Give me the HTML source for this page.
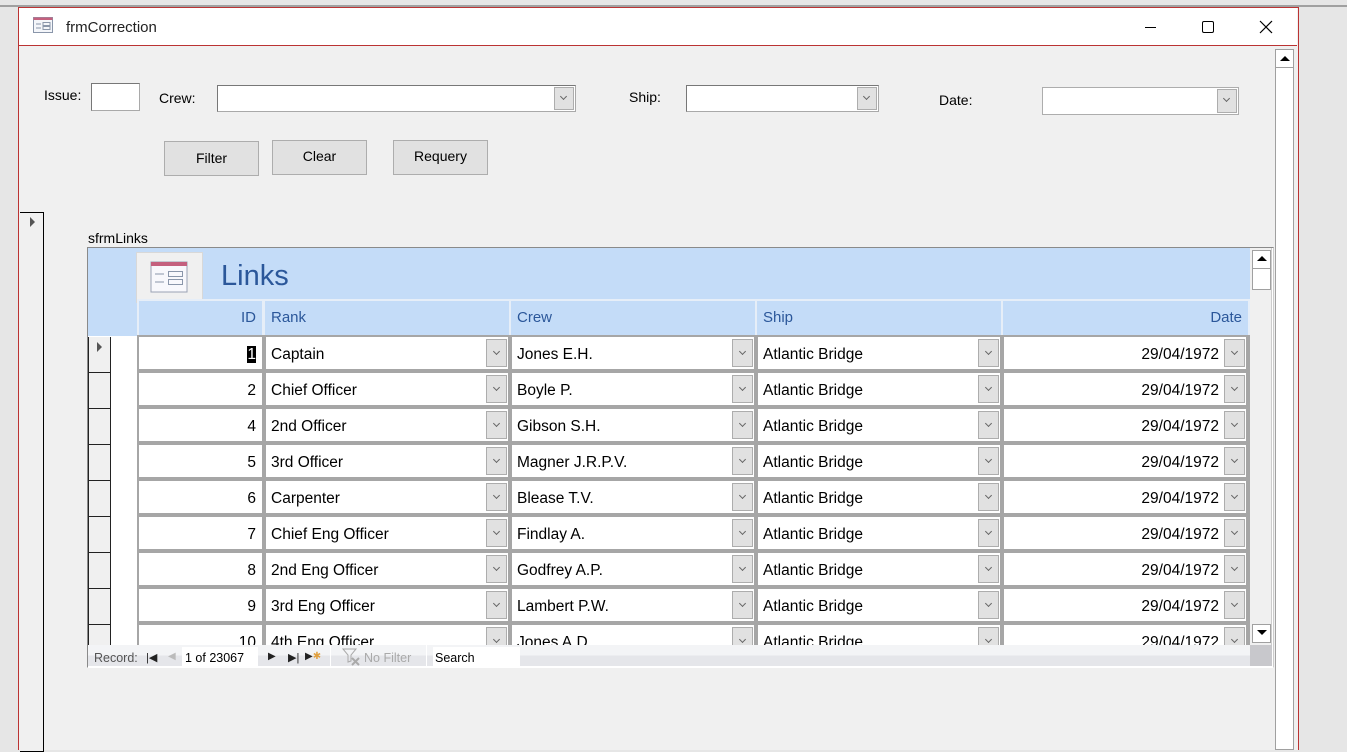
<!DOCTYPE html>
<html><head><meta charset="utf-8"><style>
*{box-sizing:border-box;margin:0;padding:0}
body{width:1347px;height:750px;overflow:hidden;background:#e6e6e6;font-family:"Liberation Sans",sans-serif;position:relative}
.a{position:absolute}
.lbl{font-size:14px;color:#000}
.tb{background:#fff;border:1px solid #a9a9a9;border-top-color:#777;border-left-color:#777}
.dd{position:absolute;right:1px;top:1px;bottom:1px;width:20px;background:#e1e1e1;border:1px solid #adadad}
.dd:after,.cb:after{content:"";position:absolute;left:6px;top:6px;width:4px;height:4px;border-right:1px solid #666;border-bottom:1px solid #666;transform:rotate(45deg)}
.btn{background:#e1e1e1;border:1px solid #adadad;font-size:14px;text-align:center;line-height:33px}
.cell{position:absolute;background:#fff;height:32px;font-size:15.5px;line-height:35px;color:#000;white-space:nowrap;overflow:hidden}
.cb{position:absolute;right:1px;top:2px;width:21px;height:28px;background:#e1e1e1;border:1px solid #adadad}
.cb:after{left:7px;top:9px}
.rs{position:absolute;left:0;width:23px;height:36px;background:#f0f0f0;border:1px solid #222;border-top:none}
.hd{position:absolute;top:0;height:35px;background:#c4dcf8;color:#2b579a;font-size:15px;line-height:33px}
</style></head><body>
<div class="a" style="left:0;top:5px;width:1347px;height:2px;background:#a0a0a0"></div>
<div class="a" style="left:18px;top:7px;width:1281px;height:743px;background:#f0f0f0;border:1px solid #b33;border-bottom:none"></div>
<div class="a" style="left:19px;top:8px;width:1278px;height:38px;background:#fff;border-bottom:1px solid #b33"></div>
<svg class="a" style="left:33px;top:17px" width="20" height="17"><rect x="0.5" y="0.5" width="19" height="15" fill="#f4f6fa" stroke="#8a96aa"/><rect x="0.5" y="0.5" width="19" height="2.5" fill="#c4607e"/><line x1="3" y1="7" x2="8" y2="7" stroke="#8a96aa"/><line x1="3" y1="11" x2="8" y2="11" stroke="#8a96aa"/><rect x="10" y="5.5" width="7" height="3" fill="none" stroke="#8a96aa"/><rect x="10" y="9.5" width="7" height="3" fill="none" stroke="#8a96aa"/></svg>
<div class="a" style="left:66px;top:19px;font-size:15px;color:#222">frmCorrection</div>
<div class="a" style="left:1145px;top:27px;width:11px;height:1px;background:#000"></div>
<div class="a" style="left:1202px;top:21px;width:12px;height:12px;border:1px solid #000;border-radius:2px"></div>
<svg class="a" style="left:1259px;top:20px" width="14" height="14"><path d="M1 1L13 13M13 1L1 13" stroke="#000" stroke-width="1.2"/></svg>
<div class="a" style="left:1275px;top:49px;width:19px;height:701px;background:#fff;border:1px solid #a0a0a0"></div>
<div class="a" style="left:1276px;top:50px;width:17px;height:18px;background:#fff;border-bottom:1px solid #a0a0a0"></div>
<div class="a" style="left:1280px;top:56px;border-left:5px solid transparent;border-right:5px solid transparent;border-bottom:5px solid #000"></div>
<div class="a lbl" style="left:44px;top:87px">Issue:</div>
<div class="a tb" style="left:91px;top:83px;width:49px;height:28px"></div>
<div class="a lbl" style="left:159px;top:90px">Crew:</div>
<div class="a tb" style="left:217px;top:85px;width:359px;height:27px"><div class="dd"></div></div>
<div class="a lbl" style="left:629px;top:89px">Ship:</div>
<div class="a tb" style="left:686px;top:85px;width:193px;height:27px"><div class="dd"></div></div>
<div class="a lbl" style="left:939px;top:92px">Date:</div>
<div class="a tb" style="left:1042px;top:87px;width:197px;height:28px;border-color:#adadad"><div class="dd"></div></div>
<div class="a btn" style="left:164px;top:141px;width:95px;height:35px">Filter</div>
<div class="a btn" style="left:272px;top:140px;width:95px;height:35px;line-height:31px">Clear</div>
<div class="a btn" style="left:393px;top:140px;width:95px;height:35px;line-height:31px">Requery</div>
<div class="a" style="left:20px;top:212px;width:24px;height:540px;border:1px solid #000;border-left:none;background:#f0f0f0"></div>
<div class="a" style="left:30px;top:217px;border-top:5px solid transparent;border-bottom:5px solid transparent;border-left:5px solid #555"></div>
<div class="a lbl" style="left:88px;top:230px">sfrmLinks</div>
<div class="a" style="left:87px;top:247px;width:1187px;height:421px;border:1px solid #8a8a8a;border-right-color:#ccc;border-bottom-color:#fff;background:#fff"></div>
<div class="a" style="left:88px;top:248px;width:1163px;height:88px;background:#c4dcf8"></div>
<div class="a" style="left:136px;top:252px;width:67px;height:51px;background:#f0f0f0;border:1px solid #d8d8d8"></div>
<svg class="a" style="left:150px;top:261px" width="40" height="34"><rect x="1" y="1" width="36" height="30" fill="#f8f8fc" stroke="#9aa2b4"/><rect x="1" y="1" width="36" height="4" fill="#c4607e"/><line x1="5" y1="13" x2="14" y2="13" stroke="#8a96aa"/><line x1="5" y1="21" x2="14" y2="21" stroke="#8a96aa"/><rect x="18.5" y="10.5" width="14" height="5" fill="none" stroke="#8a96aa"/><rect x="18.5" y="18.5" width="14" height="5" fill="none" stroke="#8a96aa"/></svg>
<div class="a" style="left:221px;top:260px;font-size:29px;color:#2b579a">Links</div>
<div class="a" style="left:137px;top:299px;width:1113px;height:37px;background:#e6eef8">
<div class="hd" style="left:2px;top:2px;width:123px;text-align:right;padding-right:6px">ID</div>
<div class="hd" style="left:128px;top:2px;width:244px;padding-left:6px">Rank</div>
<div class="hd" style="left:374px;top:2px;width:244px;padding-left:6px">Crew</div>
<div class="hd" style="left:620px;top:2px;width:244px;padding-left:6px">Ship</div>
<div class="hd" style="left:866px;top:2px;width:245px;text-align:right;padding-right:6px">Date</div>
</div>
<div class="a" style="left:88px;top:336px;width:24px;height:309px;overflow:hidden">
<div class="rs" style="top:1px"></div><div class="rs" style="top:37px"></div><div class="rs" style="top:73px"></div><div class="rs" style="top:109px"></div><div class="rs" style="top:145px"></div><div class="rs" style="top:181px"></div><div class="rs" style="top:217px"></div><div class="rs" style="top:253px"></div><div class="rs" style="top:289px"></div>
<div class="a" style="left:9px;top:6px;border-top:5px solid transparent;border-bottom:5px solid transparent;border-left:5px solid #555"></div>
</div>
<div class="a" style="left:137px;top:335px;width:1113px;height:310px;overflow:hidden;background:#a6a6a6" id="g"></div>
<div class="a" style="left:1250px;top:248px;width:22px;height:397px;background:#f0f0f0;border-right:1px solid #ccc"></div>
<div class="a" style="left:1252px;top:250px;width:19px;height:19px;background:#fff;border:1px solid #a0a0a0"></div>
<div class="a" style="left:1257px;top:256px;border-left:5px solid transparent;border-right:5px solid transparent;border-bottom:5px solid #000"></div>
<div class="a" style="left:1252px;top:268px;width:19px;height:22px;background:#fff;border:1px solid #a0a0a0"></div>
<div class="a" style="left:1252px;top:624px;width:19px;height:19px;background:#fff;border:1px solid #a0a0a0"></div>
<div class="a" style="left:1257px;top:630px;border-left:5px solid transparent;border-right:5px solid transparent;border-top:5px solid #000"></div>
<div class="a" style="left:88px;top:645px;width:1162px;height:22px;background:linear-gradient(#f3f4f6 0,#f3f4f6 50%,#e5e6ea 50%);border-bottom:1px solid #fff"></div>
<div class="a" style="left:1250px;top:645px;width:22px;height:21px;background:#c8c8cc"></div>
<div class="a" style="left:94px;top:651px;font-size:12.5px;color:#555">Record:</div>
<div class="a" style="left:146px;top:651px;font-size:11px;color:#222">|◀</div>
<div class="a" style="left:168px;top:651px;font-size:10px;color:#bbb">◀</div>
<div class="a" style="left:182px;top:647px;width:76px;height:19px;background:#fff;font-size:12.5px;padding:4px 3px;color:#000">1 of 23067</div>
<div class="a" style="left:268px;top:651px;font-size:10px;color:#222">▶</div>
<div class="a" style="left:288px;top:651px;font-size:11px;color:#222">▶|</div>
<div class="a" style="left:305px;top:651px;font-size:10px;color:#222">▶<span style="color:#e0a040">✱</span></div>
<div class="a" style="left:330px;top:645px;width:1px;height:21px;background:#fff"></div>
<svg class="a" style="left:342px;top:648px" width="20" height="18"><path d="M1 1H14L9 7V13L6 14V7Z" fill="none" stroke="#aaa"/><path d="M10 10L17 17M17 10L10 17" stroke="#aaa" stroke-width="2"/></svg>
<div class="a" style="left:364px;top:651px;font-size:12.5px;color:#aaa">No Filter</div>
<div class="a" style="left:426px;top:645px;width:1px;height:21px;background:#fff"></div>
<div class="a" style="left:433px;top:647px;width:87px;height:19px;background:#fff;font-size:12.5px;padding:4px 2px;color:#000">Search</div>
<script>
var data=[["1","Captain","Jones E.H."],["2","Chief Officer","Boyle P."],["4","2nd Officer","Gibson S.H."],["5","3rd Officer","Magner J.R.P.V."],["6","Carpenter","Blease T.V."],["7","Chief Eng Officer","Findlay A."],["8","2nd Eng Officer","Godfrey A.P."],["9","3rd Eng Officer","Lambert P.W."],["10","4th Eng Officer","Jones A.D."]];
var h="";
for(var i=0;i<data.length;i++){var t=2+36*i,d=data[i];
var id=i==0?'<span style="background:#000;color:#fff">1</span>':d[0];
h+='<div class="cell" style="left:2px;top:'+t+'px;width:123px;text-align:right;padding-right:6px">'+id+'</div>';
h+='<div class="cell" style="left:129px;top:'+t+'px;width:242px;padding-left:5px">'+d[1]+'<div class="cb"></div></div>';
h+='<div class="cell" style="left:375px;top:'+t+'px;width:242px;padding-left:5px">'+d[2]+'<div class="cb"></div></div>';
h+='<div class="cell" style="left:621px;top:'+t+'px;width:242px;padding-left:5px">Atlantic Bridge<div class="cb"></div></div>';
h+='<div class="cell" style="left:867px;top:'+t+'px;width:242px;text-align:right;padding-right:27px">29/04/1972<div class="cb"></div></div>';}
document.getElementById("g").innerHTML=h;
</script>
</body></html>
